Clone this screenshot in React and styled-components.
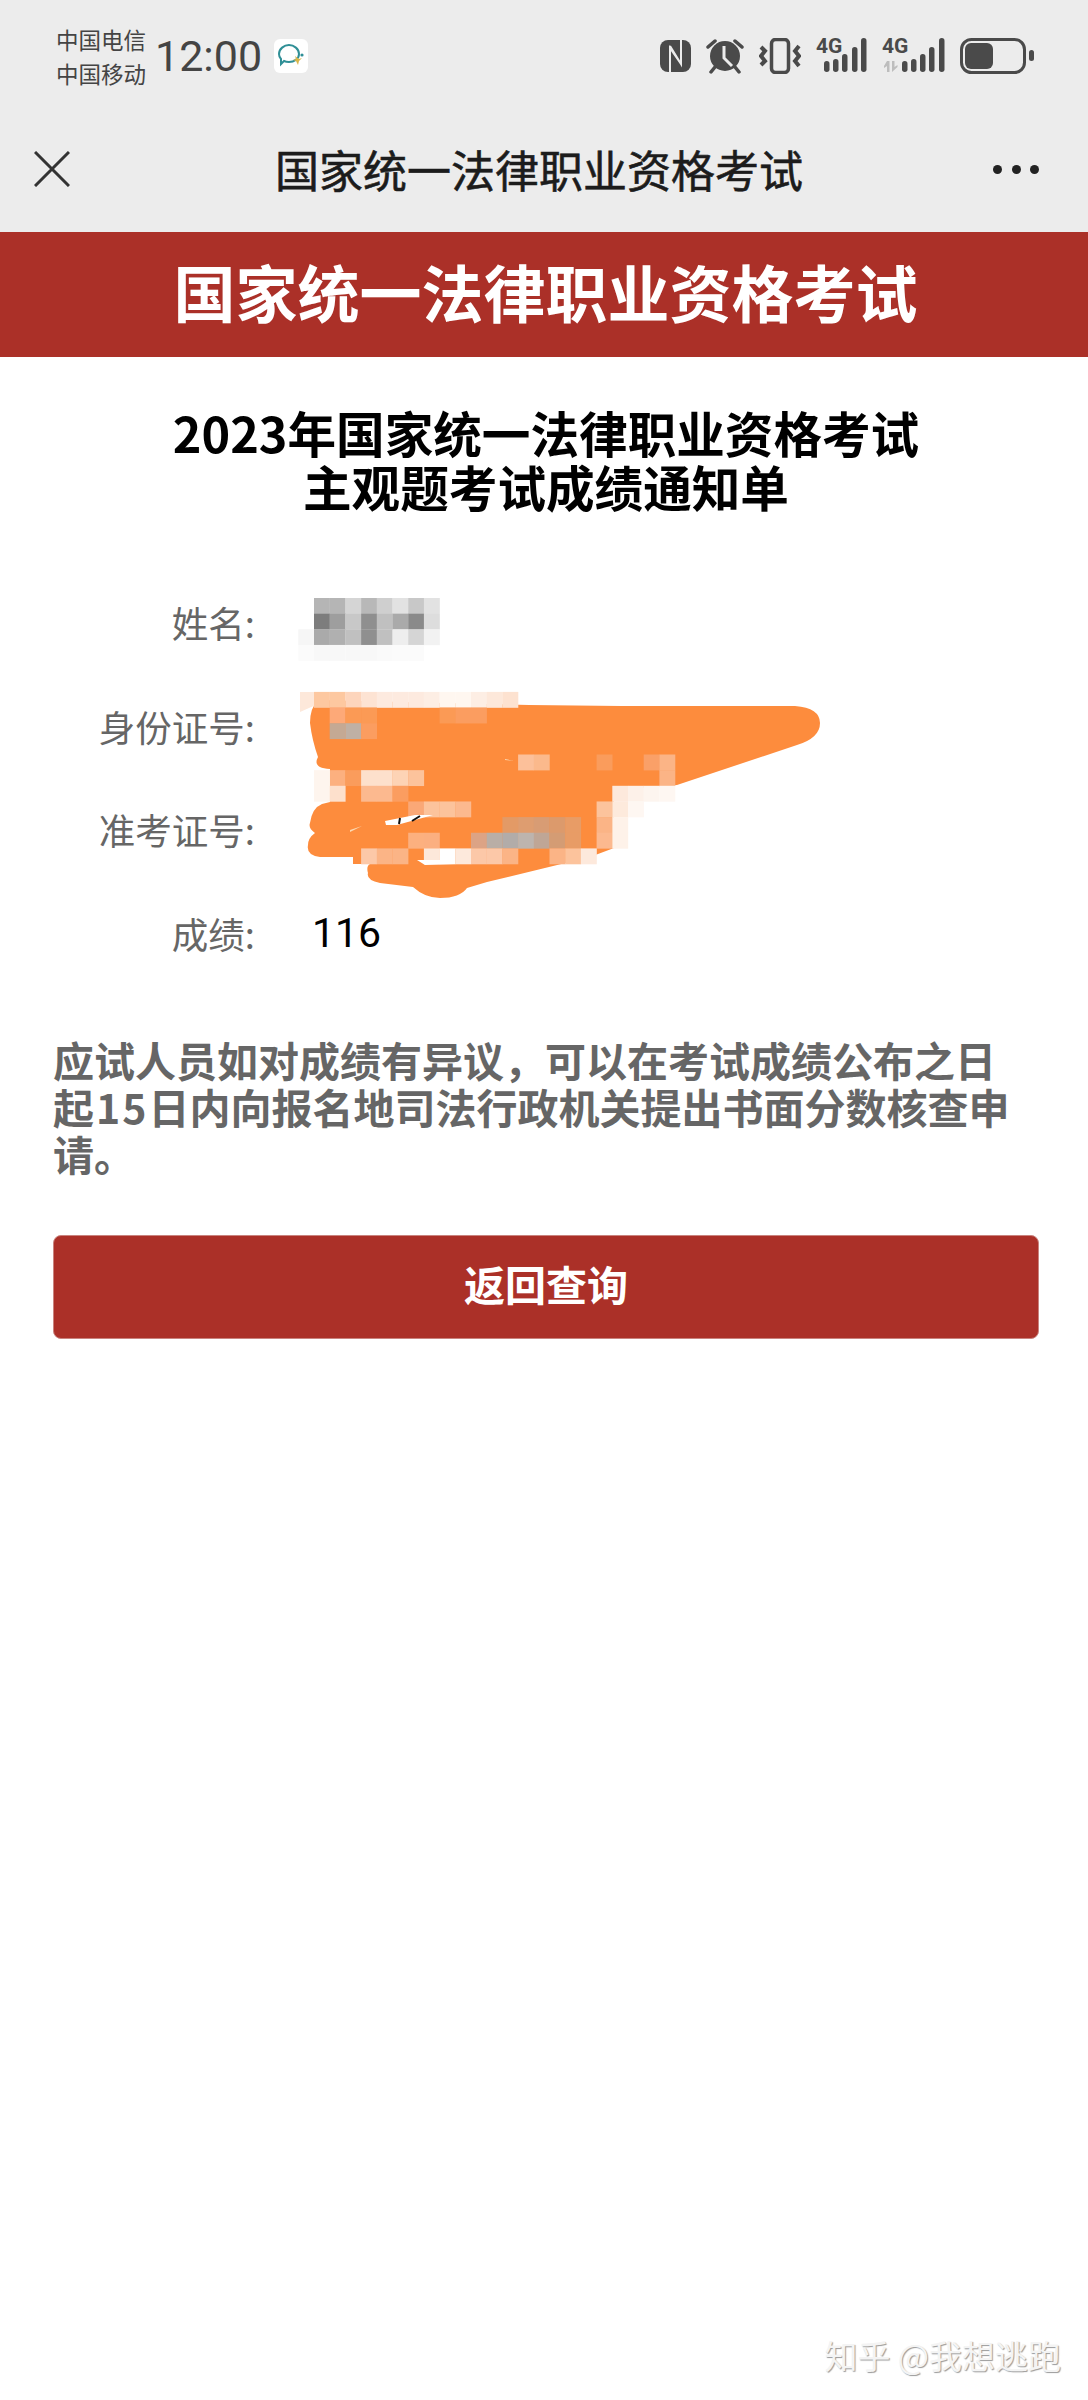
import React from 'react';
import styled, { createGlobalStyle } from 'styled-components';

const GlobalStyle = createGlobalStyle`
  html, body { margin: 0; padding: 0; background: #fff; }
  * { box-sizing: border-box; }
  body { font-family: "Noto Sans CJK SC", "Noto Sans", sans-serif; }
`;

const fields = [
  { label: '姓名:', value: '' },
  { label: '身份证号:', value: '' },
  { label: '准考证号:', value: '' },
  { label: '成绩:', value: '116' },
];

// [row, col, colour] on the mosaic grid of the blurred values
const mosaic = [
  [0,0,'#b5b5b5'],[0,1,'#b5b5b5'],[0,2,'#d5d5d5'],[0,3,'#b8b8b8'],[0,4,'#cfcfcf'],[0,5,'#e2e2e2'],[0,6,'#c8c8c8'],[0,7,'#e2e2e2'],
  [1,0,'#7d7d7d'],[1,1,'#9e9e9e'],[1,2,'#c8c8c8'],[1,3,'#8f8f8f'],[1,4,'#c0c0c0'],[1,5,'#aaaaaa'],[1,6,'#8a8a8a'],[1,7,'#dddddd'],
  [2,-1,'#f6f6f6'],[2,0,'#aaaaaa'],[2,1,'#b0b0b0'],[2,2,'#c0c0c0'],[2,3,'#8f8f8f'],[2,4,'#c0c0c0'],[2,5,'#eeeeee'],[2,6,'#d5d5d5'],[2,7,'#f2f2f2'],
  [3,-1,'#fbfbfb'],[3,0,'#f8f8f8'],[3,1,'#f8f8f8'],[3,2,'#f8f8f8'],[3,3,'#f8f8f8'],[3,4,'#fafafa'],[3,5,'#fbfbfb'],[3,6,'#fbfbfb'],
  [6,0,'#fdc8a0'],[6,1,'#fdc8a0'],[6,2,'#fdd5bc'],[6,3,'#fde3d3'],[6,4,'#fdeadf'],[6,5,'#fdeadf'],[6,6,'#fdeadf'],[6,7,'#fdeee4'],[6,8,'#fff7f0'],[6,9,'#fff7f0'],[6,10,'#fdeee4'],[6,11,'#fde8da'],[6,12,'#fde2d0'],
  [7,1,'#fda978'],[7,2,'#fb9a55'],[7,3,'#fb9a55'],[7,8,'#fb9a55'],[7,9,'#fb9d60'],[7,10,'#fb9d60'],
  [8,1,'#c4a994'],[8,2,'#bfb0a4'],[8,3,'#fb9d60'],
  [10,13,'#fcc09a'],[10,14,'#fbb98c'],[10,18,'#fa9c5c'],[10,21,'#faa068'],[10,22,'#fbb486'],
  [11,1,'#fcb07f'],[11,2,'#fa9c5c'],[11,3,'#fde0cc'],[11,4,'#fde0cc'],[11,5,'#fdd3b5'],[11,6,'#fcc39c'],[11,22,'#fbb486'],
  [11,0,'#fef5ee'],[12,0,'#fef5ee'],[12,1,'#fde0cc'],[12,3,'#fcb98f'],[12,4,'#fcb98f'],[12,5,'#fb9d60'],[12,19,'#fde9dc'],[12,20,'#fdf1e9'],[12,21,'#fdf5ef'],[12,22,'#fef7f2'],
  [13,6,'#faa877'],[13,7,'#fcc39c'],[13,8,'#fcc39c'],[13,9,'#fcb98f'],[13,18,'#fcc39c'],[13,19,'#fdeadc'],[13,20,'#fef7f2'],
  [14,12,'#e39a66'],[14,13,'#de9d70'],[14,14,'#d89c74'],[14,15,'#dc9a6c'],[14,16,'#e89c66'],[14,18,'#fbb486'],[14,19,'#fef2e9'],
  [15,6,'#fcb07f'],[15,7,'#fbaf80'],[15,10,'#dca385'],[15,11,'#b9aea6'],[15,12,'#b2aca9'],[15,13,'#bdb4ae'],[15,14,'#bfa696'],[15,15,'#d49c74'],[15,16,'#e89c66'],[15,18,'#fcb98f'],[15,19,'#fef2e9'],
  [16,3,'#fcc8a8'],[16,4,'#fbb486'],[16,5,'#fbb486'],[16,7,'#fde8da'],[16,8,'#ffffff'],[16,9,'#fde9dc'],[16,10,'#fcc8a8'],[16,11,'#fcc8a8'],[16,12,'#fbb486'],[16,15,'#fbb486'],[16,16,'#fcc39c'],[16,17,'#fde9dc'],
];

const Redaction = () => (
  <Scribble viewBox="290 590 540 320" width="540" height="320">
    <path fill="#fde8da" d="M300 692H318V704L300 712Z" />
    <path
      fill="#fd8c3d"
      d="M310 723 Q310 708 318 700 L529 705 L621 706 L795 706 Q820 708 820 723 Q820 738 797 745 L677 785 L614 790 L614 848 L590 857 L487 882 L467 888 Q460 898 440 898 Q425 898 413 887 L380 883 Q366 880 368 873 Q366 866 370 864 L353 864 L353 857 L320 857 Q306 855 308 845 Q308 838 315 833 Q308 828 310 823 Q312 808 322 804 L330 802 L330 769 Q312 768 318 757 Q312 740 310 723 Z"
    />
    {mosaic.map(([row, col, colour]) => (
      <rect key={`${row}-${col}`} x={314 + col * 15.7} y={598 + row * 15.65} width="15.9" height="15.9" fill={colour} />
    ))}
    <path fill="#fff" d="M385 821 L415 815 L433 815 L397 825 L386 825 Z M417 860 L455 860 L455 864 L425 865 Z" />
    <path fill="#fbd9b4" d="M350 830 L362 826 L350 832 Z M505 759 L514 761 L505 760 Z" />
    <path stroke="#111" strokeWidth="2" fill="none" d="M399 824 L400 818 M420 816 L412 821" />
  </Scribble>
);

const StatusIcons = () => (
  <>
    <svg width="31" height="32" viewBox="0 0 31 32">
      <rect width="31" height="32" rx="8" fill="#4a4a4a" />
      <path fill="none" stroke="#ececec" strokeWidth="2" d="M10 32V8l11 16M21 0v24L10 6" />
    </svg>
    <svg width="38" height="36" viewBox="0 0 38 36">
      <circle cx="19" cy="18" r="15" fill="#4a4a4a" />
      <path stroke="#4a4a4a" strokeWidth="3.5" strokeLinecap="round" fill="none" d="M2 9l7-6M36 9l-7-6M9 29l-4 5M29 29l4 5" />
      <path stroke="#ececec" strokeWidth="3" fill="none" d="M18 8v12l8 8" />
    </svg>
    <svg width="42" height="36" viewBox="0 0 42 36">
      <rect x="12.5" y="1.5" width="17" height="33" rx="4" fill="none" stroke="#4a4a4a" strokeWidth="3.5" />
      <path fill="none" stroke="#4a4a4a" strokeWidth="4" d="M2 9l4 4-4 5 4 5-4 4M40 8l-4 5 4 5-4 5 4 5" />
    </svg>
    <Signal>
      <SignalLabel>4G</SignalLabel>
      <svg width="51" height="36" viewBox="0 0 51 36">
        <g fill="#4a4a4a">
          <rect x="8" y="23" width="5.5" height="11" rx="2.7" />
          <rect x="17" y="21" width="5.5" height="13" rx="2.7" />
          <rect x="26" y="16" width="5.5" height="18" rx="2.7" />
          <rect x="36" y="9" width="5.5" height="25" rx="2.7" />
          <rect x="45" y="0" width="5.5" height="34" rx="2.7" />
        </g>
      </svg>
    </Signal>
    <Signal>
      <SignalLabel>4G</SignalLabel>
      <svg width="63" height="36" viewBox="0 0 63 36">
        <g fill="#4a4a4a">
          <rect x="20" y="23" width="5.5" height="11" rx="2.7" />
          <rect x="29" y="21" width="5.5" height="13" rx="2.7" />
          <rect x="38" y="16" width="5.5" height="18" rx="2.7" />
          <rect x="47" y="9" width="5.5" height="25" rx="2.7" />
          <rect x="57" y="0" width="5.5" height="34" rx="2.7" />
        </g>
        <path fill="#bdbdbd" d="M5 23h2.5v11H5v-6l-3 2v-2ZM10 23h2.5v6l3-2v2l-5.5 5Z" />
      </svg>
    </Signal>
    <svg width="74" height="36" viewBox="0 0 74 36">
      <rect x="1.5" y="1.5" width="63" height="33" rx="10" fill="none" stroke="#4a4a4a" strokeWidth="3" />
      <rect x="5" y="5" width="28" height="26" rx="6" fill="#4a4a4a" />
      <rect x="69" y="12" width="5" height="11" rx="2.5" fill="#4a4a4a" />
    </svg>
  </>
);

const App = () => (
  <Page>
    <GlobalStyle />
    <TopChrome>
      <StatusBar>
        <StatusLeft>
          <Carriers>
            <span>中国电信</span>
            <span>中国移动</span>
          </Carriers>
          <Clock>12:00</Clock>
          <AppBadge>
            <svg width="28" height="26" viewBox="0 0 28 26">
              <path fill="none" stroke="#2f8f96" strokeWidth="2" d="M2 11c0-5 5-9 10-9s10 4 10 9-5 8-10 8c-2 0-3 0-5-1l-3 3v-5c-1-1-2-3-2-5Z" />
              <path fill="#d9b64a" d="M18 13l4 3 3-1-3 3-1 4-2-4-3-1 3-1Z" />
              <circle cx="25" cy="12" r="1.6" fill="#2f8f96" />
            </svg>
          </AppBadge>
        </StatusLeft>
        <StatusRight>
          <StatusIcons />
        </StatusRight>
      </StatusBar>
      <NavBar>
        <svg width="36" height="36" viewBox="0 0 36 36">
          <path stroke="#333" strokeWidth="3" d="M1 1l34 34M35 1L1 35" />
        </svg>
        <NavTitle>国家统一法律职业资格考试</NavTitle>
        <Dots>
          <Dot /><Dot /><Dot />
        </Dots>
      </NavBar>
    </TopChrome>

    <Banner>国家统一法律职业资格考试</Banner>

    <Content>
      <Title>
        2023年国家统一法律职业资格考试
        <br />
        主观题考试成绩通知单
      </Title>

      <Fields>
        {fields.map((field) => (
          <Field key={field.label}>
            <FieldLabel>{field.label}</FieldLabel>
            <FieldValue>{field.value}</FieldValue>
          </Field>
        ))}
        <Redaction />
      </Fields>

      <Notice>
        应试人员如对成绩有异议，可以在考试成绩公布之日起<Digits>15</Digits>日内向报名地司法行政机关提出书面分数核查申请。
      </Notice>

      <BackButton type="button">返回查询</BackButton>
    </Content>

    <Watermark>知乎 @我想逃跑</Watermark>
  </Page>
);

export default App;

const Page = styled.div`
  position: relative;
  width: 1088px;
  height: 2400px;
  background: #fff;
  overflow: hidden;
`;

const TopChrome = styled.header`
  height: 232px;
  background: #ececec;
  display: flex;
  flex-direction: column;
`;

const StatusBar = styled.div`
  height: 112px;
  padding: 0 54px 0 56px;
  display: flex;
  align-items: center;
  justify-content: space-between;
`;

const StatusLeft = styled.div`
  display: flex;
  align-items: center;
`;

const Carriers = styled.div`
  display: flex;
  flex-direction: column;
  width: 99px;
  font-size: 22.5px;
  line-height: 34px;
  color: #444;
`;

const Clock = styled.div`
  width: 119px;
  font-family: Roboto, "Liberation Sans", sans-serif;
  font-size: 43px;
  color: #444;
`;

const AppBadge = styled.div`
  width: 34px;
  height: 34px;
  border-radius: 6px;
  background: #fff;
  display: flex;
  align-items: center;
  justify-content: center;
`;

const StatusRight = styled.div`
  display: flex;
  align-items: center;
  gap: 15px;
`;

const Signal = styled.div`
  position: relative;
  display: flex;
`;

const SignalLabel = styled.span`
  position: absolute;
  left: 0;
  top: -3px;
  font-family: Roboto, "Liberation Sans", sans-serif;
  font-size: 21px;
  line-height: 22px;
  font-weight: 700;
  color: #4a4a4a;
`;

const NavBar = styled.nav`
  flex: 1;
  padding: 0 0 6px 34px;
  display: flex;
  align-items: center;
`;

const NavTitle = styled.h1`
  margin: 0 0 0 205px;
  width: 530px;
  font-size: 44px;
  line-height: 60px;
  font-weight: 400;
  color: #1c1c1c;
  white-space: nowrap;
  -webkit-text-stroke: 0.6px #1c1c1c;
`;

const Dots = styled.div`
  margin-left: 188px;
  display: flex;
  gap: 9.5px;
`;

const Dot = styled.span`
  width: 9px;
  height: 9px;
  border-radius: 50%;
  background: #222;
`;

const Banner = styled.div`
  height: 125px;
  padding: 0 0 8px 3px;
  background: #ab3028;
  color: #fff;
  font-size: 62px;
  font-weight: 700;
  display: flex;
  align-items: center;
  justify-content: center;
  white-space: nowrap;
`;

const Content = styled.main`
  padding: 48px 49px 0 53px;
  display: flex;
  flex-direction: column;
`;

const Title = styled.h2`
  margin: 0 0 58px;
  font-size: 48.6px;
  line-height: 54px;
  font-weight: 700;
  color: #000;
  text-align: center;
`;

const Fields = styled.div`
  position: relative;
  display: flex;
  flex-direction: column;
`;

const Field = styled.div`
  height: 103.5px;
  display: flex;
  align-items: center;
  gap: 57px;
`;

const FieldLabel = styled.div`
  width: 202px;
  font-size: 36.5px;
  color: #666;
  text-align: right;
  white-space: nowrap;
`;

const FieldValue = styled.div`
  font-family: Roboto, "Liberation Sans", sans-serif;
  font-size: 41px;
  color: #000;
`;

const Scribble = styled.svg`
  position: absolute;
  left: 237px;
  top: 19px;
  pointer-events: none;
`;

const Notice = styled.p`
  margin: 51px 0 58px;
  max-width: 975px;
  font-size: 41px;
  line-height: 47px;
  font-weight: 700;
  color: #666;
`;

const Digits = styled.span`
  display: inline-block;
  line-height: 47px;
  letter-spacing: 2px;
  margin-left: 2px;
`;

const BackButton = styled.button`
  height: 104px;
  width: 986px;
  padding: 0 0 8px;
  border: 1px solid #c9837e;
  border-radius: 8px;
  background: #ab3028;
  color: #fff;
  font-family: inherit;
  font-size: 41px;
  font-weight: 700;
`;

const Watermark = styled.div`
  position: absolute;
  right: 27px;
  top: 2333px;
  font-size: 33px;
  line-height: 44px;
  color: #f4f4f4;
  white-space: pre;
  text-shadow: 1px 1px 1px #9a9a9a;
`;
